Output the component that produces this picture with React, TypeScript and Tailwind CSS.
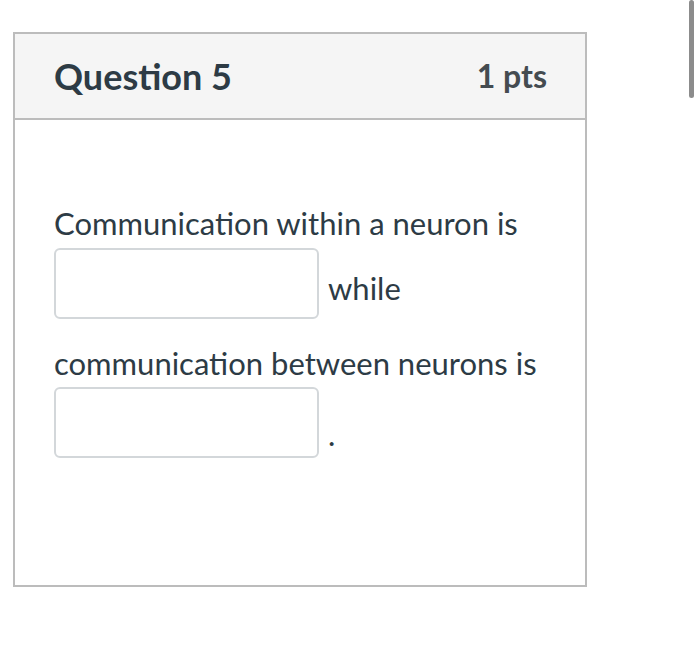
export default function App() {
  return (
    <div className="relative h-[661px] w-[700px] overflow-hidden bg-white font-['Lato','Noto_Sans',sans-serif] text-[#2d3b45]">
      {/* scrollbar thumb */}
      <div className="absolute left-[689px] top-0 h-[98px] w-[5px] rounded-full bg-[#8c8c8c]" />

      <div className="pl-[13px] pt-[32px]">
        <div className="flex h-[555px] w-[574px] flex-col border-2 border-[#bcbcbc]">
          <div className="flex h-[86px] items-center justify-between border-b-2 border-[#bcbcbc] bg-[#f5f5f5] pl-[39px] pr-[38px]">
            <h2 className="text-[36px] font-bold leading-none">Question 5</h2>
            <span className="text-[32px] font-bold leading-none text-[#444b50]">1 pts</span>
          </div>

          <div className="flex flex-col pl-[39px] pt-[88px] text-[31px] leading-none">
            <p className="h-[36px]">Communication within a neuron is</p>
            <div className="mt-[4px] flex items-center gap-[9px]">
              <input className="h-[71px] w-[265px] rounded-[6px] border-2 border-[#d3d7da] bg-white" />
              <span className="pt-[10px]">while</span>
            </div>
            <p className="mt-[29px] h-[36px]">communication between neurons is</p>
            <div className="mt-[3px] flex items-center gap-[9px]">
              <input className="h-[71px] w-[265px] rounded-[6px] border-2 border-[#d3d7da] bg-white" />
              <span className="pt-[24px]">.</span>
            </div>
          </div>
        </div>
      </div>
    </div>
  );
}
